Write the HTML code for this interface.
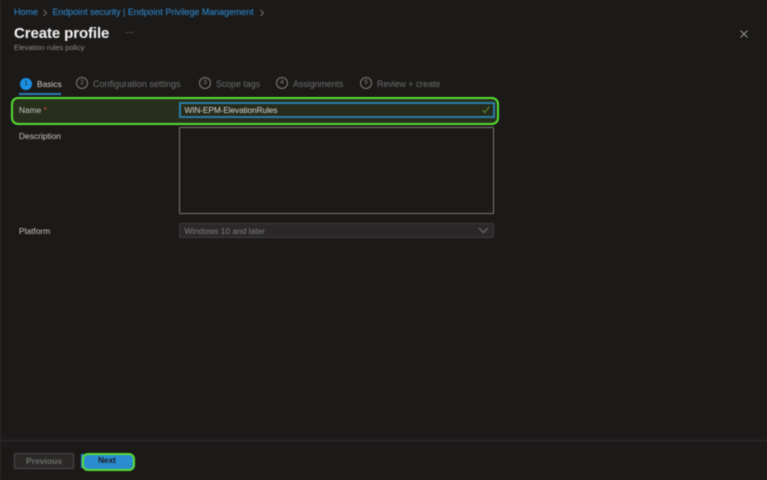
<!DOCTYPE html>
<html><head><meta charset="utf-8">
<style>
html,body{margin:0;padding:0;background:#1b1a19}
#p{position:relative;width:767px;height:480px;overflow:hidden;background:#1b1a19;font-family:"Liberation Sans",sans-serif;filter:blur(0.45px)}
#p div{position:absolute;white-space:nowrap}
.c{width:10px;height:10px;border:1px solid #7f7d7b;border-radius:50%;color:#8a8886;font-size:6.5px;line-height:10px;text-align:center}
.t{font-size:8.8px;color:#6f6e6c;line-height:12px;top:78px}
.l{font-size:8.4px;line-height:12px;color:#c8c6c4}
</style></head><body>
<div id="p">
<div style="left:0;top:0;width:1px;height:480px;background:#2b2a29"></div>
<div style="left:14px;top:6px;font-size:9px;line-height:12px;color:#2f8fd8">Home</div>
<svg style="position:absolute;left:42px;top:9px" width="6" height="8"><path d="M1.5 1L4.5 4L1.5 7" fill="none" stroke="#8a8886" stroke-width=".8"/></svg>
<div style="left:52.5px;top:6px;font-size:8.9px;line-height:12px;color:#2f8fd8">Endpoint security | Endpoint Privilege Management</div>
<svg style="position:absolute;left:259px;top:9px" width="6" height="8"><path d="M1.5 1L4.5 4L1.5 7" fill="none" stroke="#8a8886" stroke-width=".8"/></svg>
<div style="left:14px;top:25px;font-size:15px;line-height:18px;color:#f3f2f1;font-weight:bold;letter-spacing:-.1px">Create profile</div>
<div style="left:125px;top:26px;font-size:9px;line-height:12px;color:#a19f9d">···</div>
<div style="left:14px;top:43px;font-size:7.5px;line-height:10px;color:#8f8d8b">Elevation rules policy</div>
<svg style="position:absolute;left:739.5px;top:29.5px" width="8" height="8"><path d="M.6.6L7.4 7.4M7.4.6L.6 7.4" stroke="#a5a3a1" stroke-width=".9"/></svg>

<div class="c" style="left:20px;top:77.5px;background:#1b8fe3;border-color:#1b8fe3;color:#1b1a19">1</div>
<div class="t" style="left:37px;color:#d2d0ce;font-size:8.4px">Basics</div>
<div style="left:19px;top:93px;width:42px;height:2px;background:#2b7fb8"></div>
<div class="c" style="left:76px;top:77px">2</div>
<div class="t" style="left:93px;font-size:9.05px">Configuration settings</div>
<div class="c" style="left:199px;top:77px">3</div>
<div class="t" style="left:216px">Scope tags</div>
<div class="c" style="left:276px;top:77px">4</div>
<div class="t" style="left:293px">Assignments</div>
<div class="c" style="left:360px;top:77px">5</div>
<div class="t" style="left:377px">Review + create</div>

<div style="left:11px;top:97px;width:484px;height:24px;border:2px solid #57dd33;border-radius:7px;background:#282e1c"></div>
<div class="l" style="left:19px;top:104px">Name <span style="color:#e0483e">*</span></div>
<div style="left:179px;top:102px;width:311.5px;height:12px;border:2px solid #2b7ca8;background:#262b1b"></div>
<div style="left:184.5px;top:104px;font-size:8.3px;letter-spacing:-.1px;line-height:12px;color:#d8d6d4">WIN-EPM-ElevationRules</div>
<svg style="position:absolute;left:481px;top:105px" width="10" height="9"><path d="M1.5 5L3.8 7.5L8.5 1.5" fill="none" stroke="#63a33a" stroke-width=".9"/></svg>

<div class="l" style="left:19px;top:130px">Description</div>
<div style="left:179px;top:127px;width:312.5px;height:84.5px;border:1px solid #7a7977;border-radius:1px"></div>

<div class="l" style="left:19px;top:225px">Platform</div>
<div style="left:179px;top:223px;width:312.5px;height:13px;border:1px solid #3b3a39;border-radius:1px;background:#2a2928"></div>
<div style="left:184.5px;top:225px;font-size:8.4px;line-height:12px;color:#7f7d7b">Windows 10 and later</div>
<svg style="position:absolute;left:478px;top:227px" width="11" height="7"><path d="M1 1L5.5 5.5L10 1" fill="none" stroke="#8a8886" stroke-width=".8"/></svg>

<div style="left:1px;top:440px;width:766px;height:1px;background:#2f2e2d"></div>
<div style="left:14px;top:453px;width:58px;height:14px;border:1px solid #4a4948;border-radius:1px;background:#2a2928;color:#6f6e6c;font-size:8.5px;font-weight:bold;line-height:14px;text-align:center">Previous</div>
<div style="left:81px;top:454px;width:4px;height:14px;background:#2b88d8"></div>
<div style="left:82px;top:453px;width:49px;height:13.5px;border:2px solid #57dd33;border-radius:6px;background:#2b8ccf;color:#1b1a19;font-size:8.2px;font-weight:bold;line-height:12.5px;text-align:center;text-indent:-3px">Next</div>
</div>
</body></html>
